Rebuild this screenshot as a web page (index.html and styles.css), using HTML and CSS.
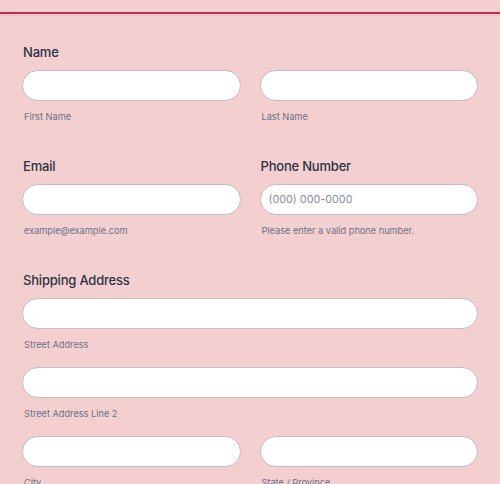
FILE: index.html
```html
<!DOCTYPE html>
<html>
<head>
<meta charset="utf-8">
<link rel="stylesheet" href="styles.css">
</head>
<body>
<div class="topbar"></div>
<div class="topline"></div>
<form class="form">
  <section class="section">
    <div class="label">Name</div>
    <div class="row two">
      <div class="field"><input class="input" type="text"><div class="sub">First Name</div></div>
      <div class="field"><input class="input" type="text"><div class="sub">Last Name</div></div>
    </div>
  </section>
  <section class="section">
    <div class="row two">
      <div class="field"><div class="label">Email</div><input class="input" type="text"><div class="sub">example@example.com</div></div>
      <div class="field"><div class="label">Phone Number</div><input class="input" type="text" placeholder="(000) 000-0000"><div class="sub">Please enter a valid phone number.</div></div>
    </div>
  </section>
  <section class="section">
    <div class="label">Shipping Address</div>
    <div class="field"><input class="input" type="text"><div class="sub">Street Address</div></div>
    <div class="field gapped"><input class="input" type="text"><div class="sub">Street Address Line 2</div></div>
    <div class="row two gapped">
      <div class="field"><input class="input" type="text"><div class="sub">City</div></div>
      <div class="field"><input class="input" type="text"><div class="sub">State / Province</div></div>
    </div>
  </section>
</form>
</body>
</html>
```
FILE: styles.css
```css
html, body {
  margin: 0;
  padding: 0;
  background: #f4cfd0;
  font-family: Inter, "Noto Sans", "Liberation Sans", sans-serif;
  overflow: hidden;
}
.topbar {
  margin-top: 12px;
  height: 2px;
  background: #c2284b;
  margin-bottom: 1px;
}
.topline {
  border-top: 1px dotted #e2b9bf;
}
.form {
  padding: 26px 22px 0 22px;
  display: flex;
  flex-direction: column;
  gap: 31px;
}
.section {
  display: flex;
  flex-direction: column;
}
.row.two {
  display: grid;
  grid-template-columns: 1fr 1fr;
  column-gap: 19px;
}
.field {
  display: flex;
  flex-direction: column;
}
.gapped {
  margin-top: 14px;
}
.label {
  font-size: 13px;
  line-height: 20px;
  font-weight: 500;
  letter-spacing: -0.2px;
  color: #2c3345;
  margin-bottom: 8px;
  padding-left: 1px;
}
.input {
  box-sizing: border-box;
  height: 31px;
  width: 100%;
  margin: 0;
  border: 1px solid #c5b9c7;
  border-radius: 16px;
  background: #fff;
  padding: 0 8px;
  font-family: Inter, "Noto Sans", "Liberation Sans", sans-serif;
  font-size: 10.8px;
  color: #2c3345;
  outline: none;
}
.input::placeholder {
  color: #8a8c9d;
}
.sub {
  margin-top: 8px;
  font-size: 9.2px;
  line-height: 16px;
  color: #6b6f89;
  padding-left: 2px;
}
```
